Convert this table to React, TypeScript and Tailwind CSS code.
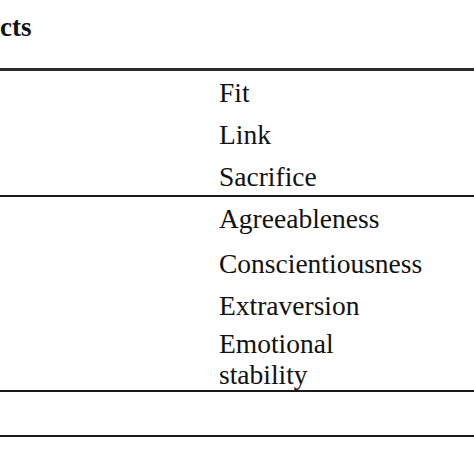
import React from 'react';

const FONT = { fontFamily: '"Liberation Serif", "Times New Roman", serif' };

const GROUPS = [
  ['Fit', 'Link', 'Sacrifice'],
  ['Agreeableness', 'Conscientiousness', 'Extraversion'],
];

export default function App() {
  return (
    <div className="w-[474px] h-[474px] bg-white text-[#111] overflow-hidden" style={FONT}>
      {/* Header */}
      <div className="h-[68px] pt-[12px]">
        <span className="block text-[27px] leading-[30px] font-bold">cts</span>
      </div>

      <div className="border-t-[3px] border-[#2b2b2b]" />

      {/* Group 1 */}
      <div className="h-[124px] pl-[219px] pt-[1px] text-[27.5px] leading-[42px]">
        {GROUPS[0].map((item) => (
          <div key={item}>{item}</div>
        ))}
      </div>
      <div className="border-t-2 border-[#1a1a1a]" />

      {/* Group 2 */}
      <div className="h-[193px] pl-[219px] pt-[1px] text-[27.5px]">
        <div className="leading-[42px]">Agreeableness</div>
        <div className="leading-[42px] mt-[3px]">Conscientiousness</div>
        <div className="leading-[42px]">Extraversion</div>
        <div className="leading-[31px] mt-[1px]">
          Emotional
          <br />
          stability
        </div>
      </div>
      <div className="border-t-2 border-[#1a1a1a]" />

      {/* Empty row */}
      <div className="h-[43px]" />
      <div className="border-t-2 border-[#1a1a1a]" />
    </div>
  );
}
